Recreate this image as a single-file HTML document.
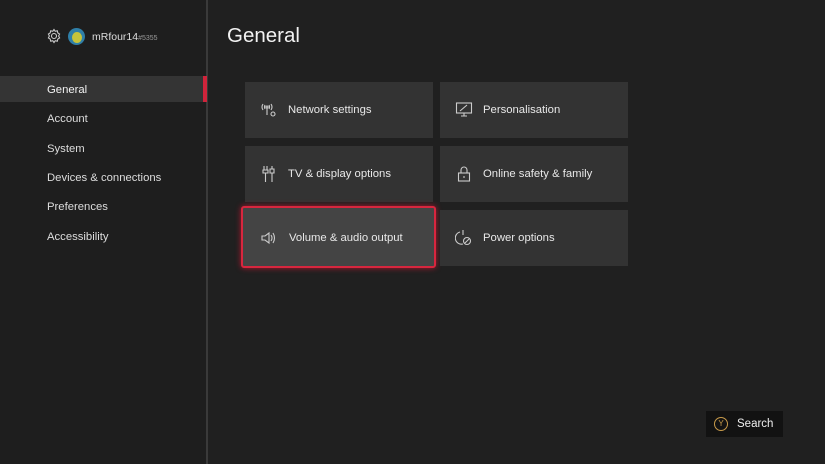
<!DOCTYPE html>
<html><head><style>
body{margin:0;width:825px;height:464px;background:#202020;font-family:"Liberation Sans",sans-serif;color:#e8e8e8;position:relative;overflow:hidden}
.side{position:absolute;left:0;top:0;width:206px;height:464px;background:#1e1e1e;border-right:2px solid #3a3a3a}
.nav{position:absolute;left:47px;font-size:11.3px;color:#ddd}
.sel{position:absolute;left:0;top:76px;width:206px;height:26px;background:#343434}
.bar{position:absolute;left:203px;top:76px;width:4px;height:26px;background:#d0243b}
h1{position:absolute;left:227px;top:24px;margin:0;font-weight:normal;font-size:20.5px;color:#f2f2f2}
.t{position:absolute;width:188px;height:56px;background:#333;font-size:11.3px;color:#e8e8e8}
.t span{position:absolute;left:43px;top:22px}
.t svg{position:absolute;left:15px;top:19px}
.f{background:#444;border:2px solid #d8263e;border-radius:3px;box-shadow:0 0 6px #b01830;width:191px;height:58px}
</style></head><body>
<div class="side"></div>
<div class="sel"></div><div class="bar"></div>
<svg style="position:absolute;left:46px;top:28px" width="16" height="16" viewBox="0 0 16 16" fill="none" stroke="#ccc" stroke-width="1.1"><circle cx="8" cy="8" r="2.5"/><path d="M8 1.5l1.2 1.8 2.1-.5.5 2.1 1.8 1.2-1 1.9 1 1.9-1.8 1.2-.5 2.1-2.1-.5L8 14.5l-1.2-1.8-2.1.5-.5-2.1-1.8-1.2 1-1.9-1-1.9 1.8-1.2.5-2.1 2.1.5z"/></svg>
<div style="position:absolute;left:68px;top:28px;width:17px;height:17px;border-radius:50%;background:#2f7fa8"><div style="position:absolute;left:4px;top:4px;width:10px;height:11px;border-radius:50%;background:#c7c43a"></div></div>
<div style="position:absolute;left:92px;top:31px;font-size:10.5px;color:#ddd">mRfour14<span style="font-size:7px;color:#999">#5355</span></div>
<div class="nav" style="top:84px;color:#f2f2f2">General</div>
<div class="nav" style="top:113px">Account</div>
<div class="nav" style="top:143px">System</div>
<div class="nav" style="top:172px">Devices &amp; connections</div>
<div class="nav" style="top:201px">Preferences</div>
<div class="nav" style="top:231px">Accessibility</div>
<h1>General</h1>
<div class="t" style="left:245px;top:82px"><svg width="18" height="18" viewBox="0 0 18 18" fill="none" stroke="#ccc" stroke-width="1.1"><path d="M3 3q-2 3 0 6M5 4q-1 2 0 4M11 3q2 3 0 6M9 4q1 2 0 4"/><circle cx="7" cy="6" r="1"/><path d="M7 7v7"/><circle cx="13" cy="13" r="2"/></svg><span>Network settings</span></div>
<div class="t" style="left:440px;top:82px"><svg width="18" height="18" viewBox="0 0 18 18" fill="none" stroke="#ccc" stroke-width="1.1"><rect x="1.5" y="2" width="15" height="10"/><path d="M6 15h6M9 12v3M5 10l7-6"/></svg><span>Personalisation</span></div>
<div class="t" style="left:245px;top:146px"><svg width="18" height="18" viewBox="0 0 18 18" fill="none" stroke="#ccc" stroke-width="1.1"><path d="M4 1v4M7 1v4M3 5h5v3H3zM5.5 8v9M12 1v3M10 4h4v4h-4zM12 8v9"/></svg><span>TV &amp; display options</span></div>
<div class="t" style="left:440px;top:146px"><svg width="18" height="18" viewBox="0 0 18 18" fill="none" stroke="#ccc" stroke-width="1.1"><rect x="3.5" y="8" width="11" height="8"/><path d="M6 8V5a3 3 0 016 0v3M9 11v2"/></svg><span>Online safety &amp; family</span></div>
<div class="t f" style="left:241px;top:206px"><svg style="left:17px;top:21px" width="18" height="18" viewBox="0 0 18 18" fill="none" stroke="#ccc" stroke-width="1.1"><path d="M2 7h3l4-3v10l-4-3H2z M11 6q2 3 0 6M13 4q3 5 0 10"/></svg><span style="left:46px;top:24px">Volume &amp; audio output</span></div>
<div class="t" style="left:440px;top:210px"><svg width="18" height="18" viewBox="0 0 18 18" fill="none" stroke="#ccc" stroke-width="1.1"><path d="M5 3a6 6 0 103 12M8 1v5"/><circle cx="12" cy="12" r="3.5"/><path d="M10 14l4-4"/></svg><span>Power options</span></div>
<div style="position:absolute;left:706px;top:411px;width:77px;height:26px;background:#121212"><div style="position:absolute;left:8px;top:6px;width:12px;height:12px;border:1px solid #c79a4a;border-radius:50%;color:#c79a4a;font-size:8px;text-align:center;line-height:12px">Y</div><div style="position:absolute;left:31px;top:7px;font-size:11.5px;color:#eee">Search</div></div>
</body></html>
